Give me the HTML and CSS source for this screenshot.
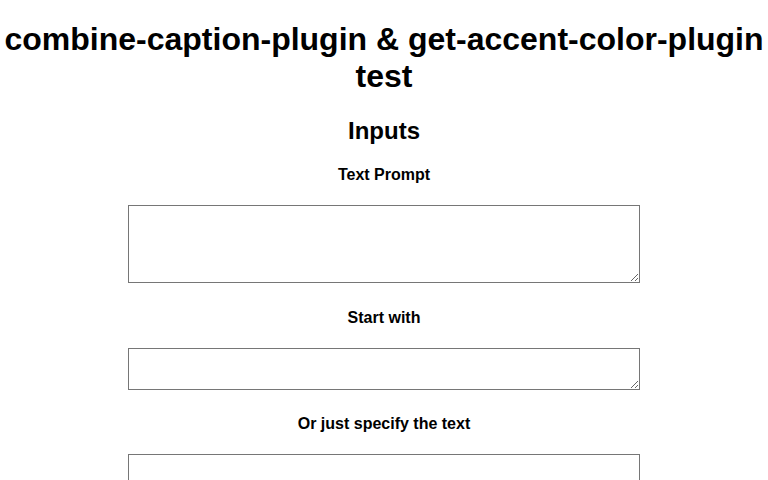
FILE: index.html
```html
<!DOCTYPE html>
<html lang="en">
<head>
    <meta charset="UTF-8">
    <meta name="viewport" content="width=device-width, initial-scale=1.0">
    <title>combine-caption-plugin &amp; get-accent-color-plugin test</title>
    <link rel="stylesheet" href="styles.css">
</head>
<body>
    <h1>combine-caption-plugin &amp; get-accent-color-plugin test</h1>

    <h2>Inputs</h2>

    <div class="field">
        <h4>Text Prompt</h4>
        <textarea id="prompt" class="input-tall"></textarea>
    </div>

    <div class="field">
        <h4>Start with</h4>
        <textarea id="start-with" class="input-short"></textarea>
    </div>

    <div class="field">
        <h4>Or just specify the text</h4>
        <textarea id="text" class="input-short"></textarea>
    </div>
</body>
</html>
```

FILE: styles.css
```css
body {
    font-family: 'Liberation Sans', Arial, sans-serif;
    text-align: center;
    color: #000;
    background: #fff;
    margin: 0;
}

textarea {
    width: 512px;
    box-sizing: border-box;
    border: 1px solid #767676;
    border-radius: 0;
    padding: 2px;
}

.input-tall {
    height: 78px;
}

.input-short {
    height: 42px;
}
```
